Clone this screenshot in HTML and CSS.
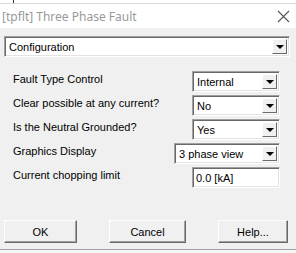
FILE: index.html
```html
<!DOCTYPE html>
<html>
<head>
    <title>[tpflt] Three Phase Fault</title>
    <link rel="stylesheet" href="styles.css">
</head>
<body>
    <div class="topstrip"><span class="mark"></span></div>
    <div class="titlebar">
        <span class="title">[tpflt] Three Phase Fault</span>
        <svg class="close" width="13" height="13" viewBox="0 0 13 13">
            <path d="M1 1 L12 12 M12 1 L1 12" stroke="#555555" stroke-width="1.1" fill="none"/>
        </svg>
    </div>
    <div class="content">
        <div class="combo wide">
            <span class="value">Configuration</span>
            <span class="arrow"></span>
        </div>

        <div class="fields">
            <div class="row">
                <span class="label">Fault Type Control</span>
                <div class="combo small">
                    <span class="value">Internal</span>
                    <span class="arrow"></span>
                </div>
            </div>
            <div class="row">
                <span class="label">Clear possible at any current?</span>
                <div class="combo small">
                    <span class="value">No</span>
                    <span class="arrow"></span>
                </div>
            </div>
            <div class="row">
                <span class="label">Is the Neutral Grounded?</span>
                <div class="combo small">
                    <span class="value">Yes</span>
                    <span class="arrow"></span>
                </div>
            </div>
            <div class="row">
                <span class="label">Graphics Display</span>
                <div class="combo medium">
                    <span class="value">3 phase view</span>
                    <span class="arrow"></span>
                </div>
            </div>
            <div class="row">
                <span class="label">Current chopping limit</span>
                <div class="edit small">0.0 [kA]</div>
            </div>
        </div>

        <div class="buttons">
            <button class="btn ok">OK</button>
            <button class="btn cancel">Cancel</button>
            <button class="btn help">Help...</button>
        </div>
    </div>
    <div class="bottom"></div>
</body>
</html>
```

FILE: styles.css
```css
body {
    margin: 0;
    width: 296px;
    height: 253px;
    overflow: hidden;
    background-color: #f0f0f0;
    font-family: "Liberation Sans", Arial, sans-serif;
    font-size: 11px;
    color: #000;
    display: flex;
    flex-direction: column;
}

.topstrip {
    height: 4px;
    flex-shrink: 0;
    background-color: #ffffff;
    border-bottom: 1px solid #d9d9d9;
    box-sizing: border-box;
    padding-left: 13px;
}

.topstrip .mark {
    display: block;
    width: 1px;
    height: 3px;
    background-color: #333;
}

.titlebar {
    height: 24px;
    flex-shrink: 0;
    background-color: #ffffff;
    display: flex;
    align-items: center;
    justify-content: space-between;
    padding: 0 6px 0 2px;
}

.title {
    font-family: "Noto Sans", "Open Sans", sans-serif;
    font-size: 12px;
    color: #999999;
}

.close {
    display: block;
    flex-shrink: 0;
}

.content {
    flex: 1;
    padding: 8px 6px 0 4px;
}

.combo,
.edit {
    display: flex;
    align-items: center;
    background-color: #ffffff;
    border-top: 1px solid #a0a0a0;
    border-left: 1px solid #a0a0a0;
    border-right: 1px solid #ffffff;
    border-bottom: 1px solid #ffffff;
    box-shadow: inset 1px 1px 0 #696969, inset -1px -1px 0 #e3e3e3;
    box-sizing: border-box;
    height: 21px;
    padding: 0 2px 0 4px;
}

.combo .value {
    flex: 1;
}

.combo .arrow {
    width: 15px;
    height: 15px;
    background-color: #f0f0f0;
    box-sizing: border-box;
    border-top: 1px solid #ffffff;
    border-left: 1px solid #ffffff;
    border-right: 1px solid #696969;
    border-bottom: 1px solid #696969;
    display: flex;
    align-items: center;
    justify-content: center;
}

.combo .arrow::after {
    content: "";
    border-left: 4px solid transparent;
    border-right: 4px solid transparent;
    border-top: 4px solid #000;
}

.wide {
    width: 286px;
}

.fields {
    margin-top: 14px;
    padding-left: 9px;
    padding-right: 10px;
}

.row {
    display: flex;
    justify-content: space-between;
    height: 21px;
    margin-bottom: 3px;
}

.label {
    padding-top: 1px;
    line-height: 14px;
}

.small {
    width: 88px;
}

.medium {
    width: 106px;
}

.edit {
    padding-left: 3px;
}

.buttons {
    display: flex;
    justify-content: space-between;
    margin-top: 32px;
    padding-right: 2px;
}

.btn {
    font-family: "Liberation Sans", Arial, sans-serif;
    font-size: 11px;
    height: 23px;
    background-color: #f0f0f0;
    border-top: 1px solid #ffffff;
    border-left: 1px solid #ffffff;
    border-right: 1px solid #696969;
    border-bottom: 1px solid #696969;
    box-shadow: inset -1px -1px 0 #a0a0a0;
    padding: 0;
}

.ok {
    width: 73px;
}

.cancel {
    width: 77px;
}

.help {
    width: 70px;
}

.bottom {
    height: 3px;
    flex-shrink: 0;
    border-top: 1px solid #a0a0a0;
    background-color: #f7f7f7;
}
```
